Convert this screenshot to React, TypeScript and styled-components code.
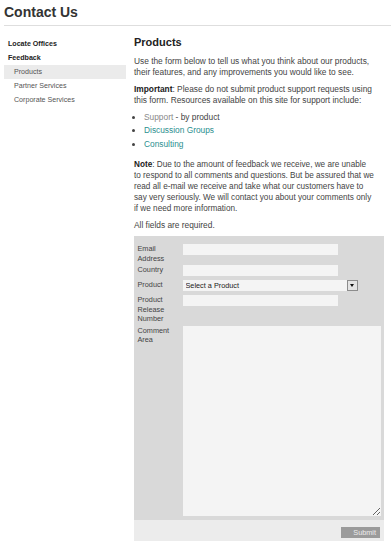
import React from "react";
import styled, { createGlobalStyle } from "styled-components";

const GlobalStyle = createGlobalStyle`
  html, body {
    margin: 0;
    padding: 0;
    background: #fff;
  }
  body {
    font-family: "Liberation Sans", Arial, sans-serif;
    color: #444;
  }
`;

const Page = styled.div`
  padding: 0 7px 0 4px;
`;

const Header = styled.h1`
  margin: 0 -7px 0 0;
  padding: 3px 0 4px;
  font-size: 14px;
  line-height: 18px;
  font-weight: bold;
  color: #333;
  border-bottom: 1px solid #dedede;
`;

const Columns = styled.div`
  display: flex;
  gap: 8px;
`;

const Sidebar = styled.nav`
  width: 122px;
  flex-shrink: 0;
  padding-top: 11px;
`;

const NavItem = styled.div<{ $sub?: boolean; $active?: boolean }>`
  font-size: 7.1px;
  line-height: 14px;
  font-weight: ${(p) => (p.$sub ? "normal" : "bold")};
  color: ${(p) => (p.$sub ? "#555" : "#222")};
  padding-left: ${(p) => (p.$sub ? "10px" : "4px")};
  background: ${(p) => (p.$active ? "#ebebeb" : "transparent")};
`;

const Main = styled.main`
  flex: 1;
  min-width: 0;
`;

const Title = styled.h2`
  margin: 9px 0 6.5px;
  font-size: 11px;
  line-height: 14px;
  font-weight: bold;
  color: #222;
`;

const Para = styled.p<{ $gap?: number; $size?: number }>`
  margin: 0 0 ${(p) => p.$gap ?? 6}px;
  font-size: ${(p) => p.$size ?? 8.35}px;
  line-height: 11px;
  color: #444;

  strong {
    color: #222;
  }
`;

const List = styled.ul`
  margin: 0 0 8.5px;
  padding-left: 10px;
  font-size: 8.35px;
  line-height: 13.3px;
  color: #444;
`;

const Item = styled.li``;

const Link = styled.a<{ $muted?: boolean }>`
  color: ${(p) => (p.$muted ? "#8a8a8a" : "#2c8f8f")};
  text-decoration: none;
`;

const FormBox = styled.form`
  background: #d9d9d9;
  margin-top: 5.5px;
`;

const Fields = styled.div`
  display: grid;
  grid-template-columns: 45px 1fr;
  row-gap: 2px;
  padding: 8px 4px 4px 3.5px;
`;

const Label = styled.label`
  font-size: 7.3px;
  line-height: 9.5px;
  color: #444;
`;

const TextInput = styled.input<{ $w: number }>`
  display: block;
  box-sizing: border-box;
  width: ${(p) => p.$w}px;
  height: 10.5px;
  margin: 0 0 2px;
  padding: 0 3px;
  border: none;
  background: #f4f4f4;
  font: 7px "Liberation Sans", Arial, sans-serif;
`;

const SelectWrap = styled.div`
  position: relative;
  width: 175px;
  height: 11.5px;
  margin-bottom: 2px;
`;

const Select = styled.select`
  display: block;
  box-sizing: border-box;
  appearance: none;
  width: 100%;
  height: 100%;
  margin: 0;
  padding: 0 3px;
  border: none;
  border-radius: 0;
  background: #f4f4f4;
  color: #222;
  font: 7.3px "Liberation Sans", Arial, sans-serif;
`;

const ArrowBox = styled.span`
  position: absolute;
  right: 0;
  top: 0;
  box-sizing: border-box;
  width: 11px;
  height: 11.5px;
  border: 1px solid #8c8c8c;
  background: #e4e4e4;
  display: flex;
  align-items: center;
  justify-content: center;
  pointer-events: none;

  &::after {
    content: "";
    border-left: 2.5px solid transparent;
    border-right: 2.5px solid transparent;
    border-top: 3px solid #111;
  }
`;

const TextArea = styled.textarea`
  box-sizing: border-box;
  width: 198px;
  height: 190px;
  margin: 0;
  padding: 2px 3px;
  border: none;
  background: #f4f4f4;
  font: 7px "Liberation Sans", Arial, sans-serif;
  display: block;
`;

const Footer = styled.div`
  background: #ececec;
  display: flex;
  justify-content: flex-end;
  padding: 7.5px 4px 3px;
`;

const SubmitButton = styled.button`
  width: 39px;
  height: 11px;
  padding: 0 4px 0 0;
  border: none;
  background: #9b9b9b;
  color: #ececec;
  font: 7.3px "Liberation Sans", Arial, sans-serif;
  text-align: right;
`;

const App: React.FC = () => {
  return (
    <Page>
      <GlobalStyle />
      <Header>Contact Us</Header>
      <Columns>
        <Sidebar>
          <NavItem>Locate Offices</NavItem>
          <NavItem>Feedback</NavItem>
          <NavItem $sub $active>
            Products
          </NavItem>
          <NavItem $sub>Partner Services</NavItem>
          <NavItem $sub>Corporate Services</NavItem>
        </Sidebar>
        <Main>
          <Title>Products</Title>
          <Para>
            Use the form below to tell us what you think about our products,
            their features, and any improvements you would like to see.
          </Para>
          <Para $gap={5.5}>
            <strong>Important</strong>: Please do not submit product support
            requests using this form. Resources available on this site for
            support include:
          </Para>
          <List>
            <Item>
              <Link $muted href="#">
                Support
              </Link>{" "}
              - by product
            </Item>
            <Item>
              <Link href="#">Discussion Groups</Link>
            </Item>
            <Item>
              <Link href="#">Consulting</Link>
            </Item>
          </List>
          <Para $gap={5.5} $size={8.2}>
            <strong>Note</strong>: Due to the amount of feedback we receive, we
            are unable
            <br />
            to respond to all comments and questions. But be assured that we
            <br />
            read all e-mail we receive and take what our customers have to
            <br />
            say very seriously. We will contact you about your comments only
            <br />
            if we need more information.
          </Para>
          <Para $gap={0}>All fields are required.</Para>
          <FormBox onSubmit={(e) => e.preventDefault()}>
            <Fields>
              <Label htmlFor="email">
                Email
                <br />
                Address
              </Label>
              <TextInput id="email" type="text" $w={155} />
              <Label htmlFor="country">Country</Label>
              <TextInput id="country" type="text" $w={155} />
              <Label htmlFor="product">Product</Label>
              <SelectWrap>
                <Select id="product" defaultValue="">
                  <option value="">Select a Product</option>
                </Select>
                <ArrowBox />
              </SelectWrap>
              <Label htmlFor="release">
                Product
                <br />
                Release
                <br />
                Number
              </Label>
              <TextInput id="release" type="text" $w={155} />
              <Label htmlFor="comment">
                Comment
                <br />
                Area
              </Label>
              <TextArea id="comment" />
            </Fields>
            <Footer>
              <SubmitButton type="submit">Submit</SubmitButton>
            </Footer>
          </FormBox>
        </Main>
      </Columns>
    </Page>
  );
};

export default App;
